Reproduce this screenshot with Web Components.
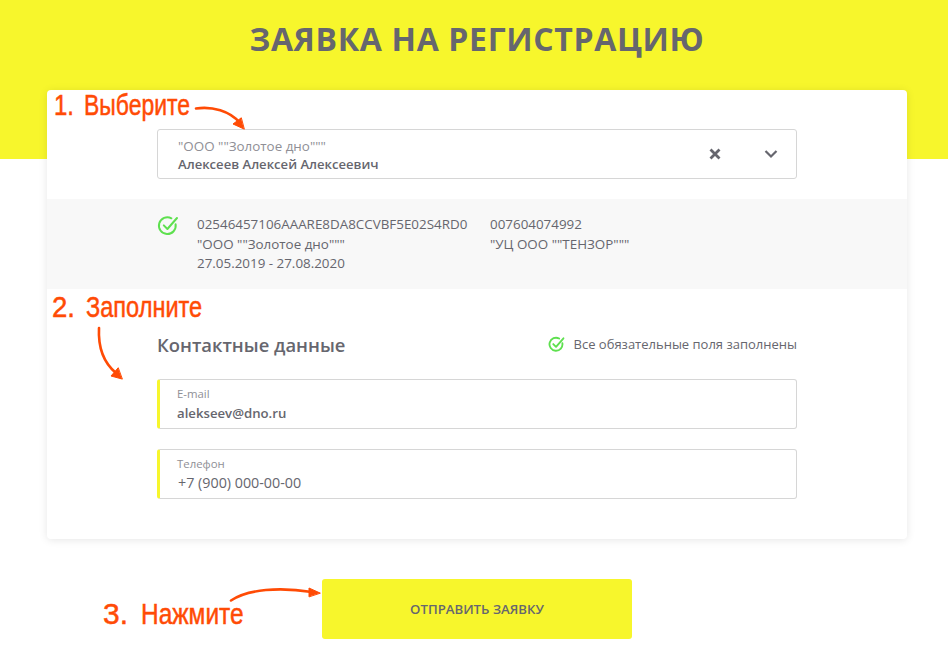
<!DOCTYPE html>
<html lang="ru">
<head>
<meta charset="utf-8">
<title>Заявка на регистрацию</title>
<style>
    html, body { margin: 0; padding: 0; background: #fff; }
    body { font-family: "Open Sans", "Noto Sans", sans-serif; color: #66666e; }
</style>
</head>
<body>
<reg-page>
    <reg-select slot="select" top='"ООО ""Золотое дно"""' bottom="Алексеев Алексей Алексеевич"></reg-select>
    <reg-cert slot="cert"></reg-cert>
    <reg-contacts slot="contacts">
        <reg-field label="E-mail" value="alekseev@dno.ru"></reg-field>
        <reg-field label="Телефон" value="+7 (900) 000-00-00" class="phone"></reg-field>
    </reg-contacts>
</reg-page>

<script>
const CHECK = (size, stroke) => `
    <svg width="${size}" height="${size}" viewBox="0 0 22 22" fill="none" stroke="#5ee04f" stroke-width="${stroke}" stroke-linecap="round" stroke-linejoin="round">
        <path d="M18.6 9.2a8.4 8.4 0 1 1-4.2-5.9"/>
        <path d="M6.8 10.4l3.6 3.6 9.6-11"/>
    </svg>`;

class RegPage extends HTMLElement {
    connectedCallback() {
        this.attachShadow({ mode: 'open' });
        this.shadowRoot.innerHTML = `
            <style>
                :host { display: block; position: relative; height: 665px; overflow: hidden; }
                .head {
                    height: 159px;
                    background: #f7f62c;
                    box-sizing: border-box;
                    padding: 17px 0 0 6px;
                    text-align: center;
                }
                h1 {
                    margin: 0;
                    font-size: 32px;
                    line-height: 44px;
                    font-weight: 700;
                    letter-spacing: 0.65px;
                    color: #66666e;
                }
                .card {
                    width: 860px;
                    height: 449px;
                    margin: -69px 0 0 47px;
                    background: #fff;
                    border-radius: 4px;
                    box-shadow: 0 1px 8px rgba(0, 0, 0, 0.1);
                    display: flex;
                    flex-direction: column;
                }
                .top { padding: 39px 110px 20px; }
                .foot { display: flex; justify-content: center; padding: 40px 0 0 6px; }
                button {
                    width: 310px;
                    height: 60px;
                    border: 0;
                    border-radius: 3px;
                    background: #f7f62c;
                    color: #66666e;
                    font: 600 13.200px "Open Sans", sans-serif;
                    cursor: pointer;
                }
                .note {
                    position: absolute;
                    color: #ff4b05;
                    font-family: "Liberation Sans", sans-serif;
                    font-size: 30px;
                    line-height: 32px;
                    white-space: nowrap;
                    transform: scaleX(var(--sx, 0.8));
                    transform-origin: left bottom;
                    -webkit-text-stroke: 0.5px #ff4b05;
                }
                svg.arrow { position: absolute; overflow: visible; }
                svg.arrow path { fill: none; stroke: #ff4b05; stroke-width: 2.6; stroke-linecap: round; stroke-linejoin: round; }
                svg.arrow path.tip { fill: #ff4b05; stroke-width: 1; }
            </style>
            <div class="head"><h1>ЗАЯВКА НА РЕГИСТРАЦИЮ</h1></div>
            <div class="card">
                <div class="top"><slot name="select"></slot></div>
                <slot name="cert"></slot>
                <slot name="contacts"></slot>
            </div>
            <div class="foot"><button>ОТПРАВИТЬ ЗАЯВКУ</button></div>

            <div class="note" style="left:54px;top:89px">1.</div>
            <div class="note" style="left:84px;top:89px;--sx:0.765">Выберите</div>
            <svg class="arrow" style="left:0;top:0" width="1" height="1">
                <path d="M196 108.500C212 106 230 111 240 123"/>
                <path class="tip" d="M244 129L233 124L241 118Z"/>
            </svg>

            <div class="note" style="left:52px;top:291px;--sx:0.92">2.</div>
            <div class="note" style="left:86px;top:291px;--sx:0.785">Заполните</div>
            <svg class="arrow" style="left:0;top:0" width="1" height="1">
                <path d="M99 328C98 348 104 363 116 373"/>
                <path class="tip" d="M122 379L111 376L118 368Z"/>
            </svg>

            <div class="note" style="left:103px;top:598px;--sx:1">3.</div>
            <div class="note" style="left:141px;top:598px;--sx:0.815">Нажмите</div>
            <svg class="arrow" style="left:0;top:0" width="1" height="1">
                <path d="M231 600.500C248 589 280 587 312 592"/>
                <path class="tip" d="M320 593L309 588L309 596.500Z"/>
            </svg>
        `;
    }
}

class RegSelect extends HTMLElement {
    connectedCallback() {
        this.attachShadow({ mode: 'open' });
        this.shadowRoot.innerHTML = `
            <style>
                :host {
                    display: flex;
                    align-items: center;
                    height: 50px;
                    box-sizing: border-box;
                    border: 1px solid #d6d6d6;
                    border-radius: 3px;
                    padding: 0 18px 0 20px;
                    background: #fff;
                }
                .txt { flex: 1; line-height: 18px; margin-top: 1px; }
                .t { color: #8f8f96; font-size: 13.400px; }
                .b { font-weight: 600; color: #66666e; font-size: 13.100px; }
                .x { margin-right: 43px; display: flex; }
                .c { display: flex; }
            </style>
            <div class="txt">
                <div class="t">${this.getAttribute('top')}</div>
                <div class="b">${this.getAttribute('bottom')}</div>
            </div>
            <div class="x"><svg width="12" height="12" viewBox="0 0 12 12" stroke="#66666e" stroke-width="2.800" fill="none"><path d="M1.500 1.500l9 9M10.500 1.500l-9 9"/></svg></div>
            <div class="c"><svg width="14" height="10" viewBox="0 0 14 10" stroke="#66666e" stroke-width="2.200" fill="none"><path d="M1.500 2l5.500 5.500L12.500 2"/></svg></div>
        `;
    }
}

class RegCert extends HTMLElement {
    connectedCallback() {
        this.attachShadow({ mode: 'open' });
        this.shadowRoot.innerHTML = `
            <style>
                :host {
                    display: flex;
                    height: 90px;
                    box-sizing: border-box;
                    background: #f8f8f8;
                    padding: 16px 0 0 110px;
                    font-size: 13.400px;
                    line-height: 19.500px;
                    color: #66666e;
                }
                .ic { width: 40px; flex: none; display: flex; align-items: flex-start; }
                .col1 { width: 293px; flex: none; }
            </style>
            <div class="ic">${CHECK(22, 2)}</div>
            <div class="col1">
                <div>02546457106AAARE8DA8CCVBF5E02S4RD0</div>
                <div>"ООО ""Золотое дно"""</div>
                <div>27.05.2019 - 27.08.2020</div>
            </div>
            <div>
                <div>007604074992</div>
                <div>"УЦ ООО ""ТЕНЗОР"""</div>
            </div>
        `;
    }
}

class RegContacts extends HTMLElement {
    connectedCallback() {
        this.attachShadow({ mode: 'open' });
        this.shadowRoot.innerHTML = `
            <style>
                :host { display: block; padding: 42px 110px 0; }
                .row {
                    display: flex;
                    justify-content: space-between;
                    align-items: center;
                    height: 26px;
                    margin-bottom: 22px;
                }
                h2 { margin: 0; font-size: 18.400px; font-weight: 600; color: #66666e; }
                .ok { display: flex; align-items: center; gap: 9px; font-size: 13px; color: #66666e; }
                .ok svg { display: block; }
                .list { display: flex; flex-direction: column; gap: 20px; }
            </style>
            <div class="row">
                <h2>Контактные данные</h2>
                <div class="ok">${CHECK(17, 2.400)}<span>Все обязательные поля заполнены</span></div>
            </div>
            <div class="list"><slot></slot></div>
        `;
    }
}

class RegField extends HTMLElement {
    connectedCallback() {
        this.attachShadow({ mode: 'open' });
        this.shadowRoot.innerHTML = `
            <style>
                :host {
                    display: block;
                    height: 50px;
                    box-sizing: border-box;
                    border: 1px solid #d6d6d6;
                    border-left: 3px solid #f7f62c;
                    border-radius: 3px;
                    padding: 6px 0 0 17px;
                    background: #fff;
                }
                .l { font-size: 11.400px; line-height: 15px; color: #8f8f96; }
                .v { font-size: 13.200px; font-weight: 600; line-height: 20px; margin-top: 2px; color: #66666e; }
                :host(.phone) .v { font-size: 14.300px; font-weight: 500; padding-left: 1px; }
            </style>
            <div class="l">${this.getAttribute('label')}</div>
            <div class="v">${this.getAttribute('value')}</div>
        `;
    }
}

customElements.define('reg-page', RegPage);
customElements.define('reg-select', RegSelect);
customElements.define('reg-cert', RegCert);
customElements.define('reg-contacts', RegContacts);
customElements.define('reg-field', RegField);
</script>
</body>
</html>
